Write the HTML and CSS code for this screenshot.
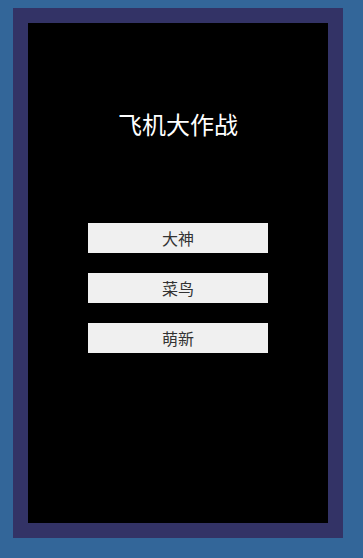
FILE: index.html
```html
<!DOCTYPE html>
<html>
<head>
<meta charset="utf-8">
<link rel="stylesheet" href="styles.css">
</head>
<body>
<div class="frame">
  <h1 class="title">飞机大作战</h1>
  <div class="menu">
    <div class="btn">大神</div>
    <div class="btn">菜鸟</div>
    <div class="btn">萌新</div>
  </div>
</div>
</body>
</html>
```
FILE: styles.css
```css
html, body {
  margin: 0;
  padding: 0;
}
body {
  background: #336699;
  padding: 8px 0 0 13px;
  height: 558px;
  box-sizing: border-box;
  font-family: "Noto Sans CJK SC", "Noto Sans", sans-serif;
}
.frame {
  width: 300px;
  height: 500px;
  border: 15px solid #333366;
  background: #000;
  display: flex;
  flex-direction: column;
  align-items: center;
}
.title {
  margin: 86px 0 0 0;
  font-size: 24px;
  line-height: 30px;
  font-weight: normal;
  color: #fff;
}
.menu {
  margin-top: 84px;
  display: flex;
  flex-direction: column;
  gap: 20px;
}
.btn {
  width: 180px;
  height: 30px;
  line-height: 30px;
  background: #f0f0f0;
  color: #333;
  text-align: center;
  font-size: 16px;
}
```
